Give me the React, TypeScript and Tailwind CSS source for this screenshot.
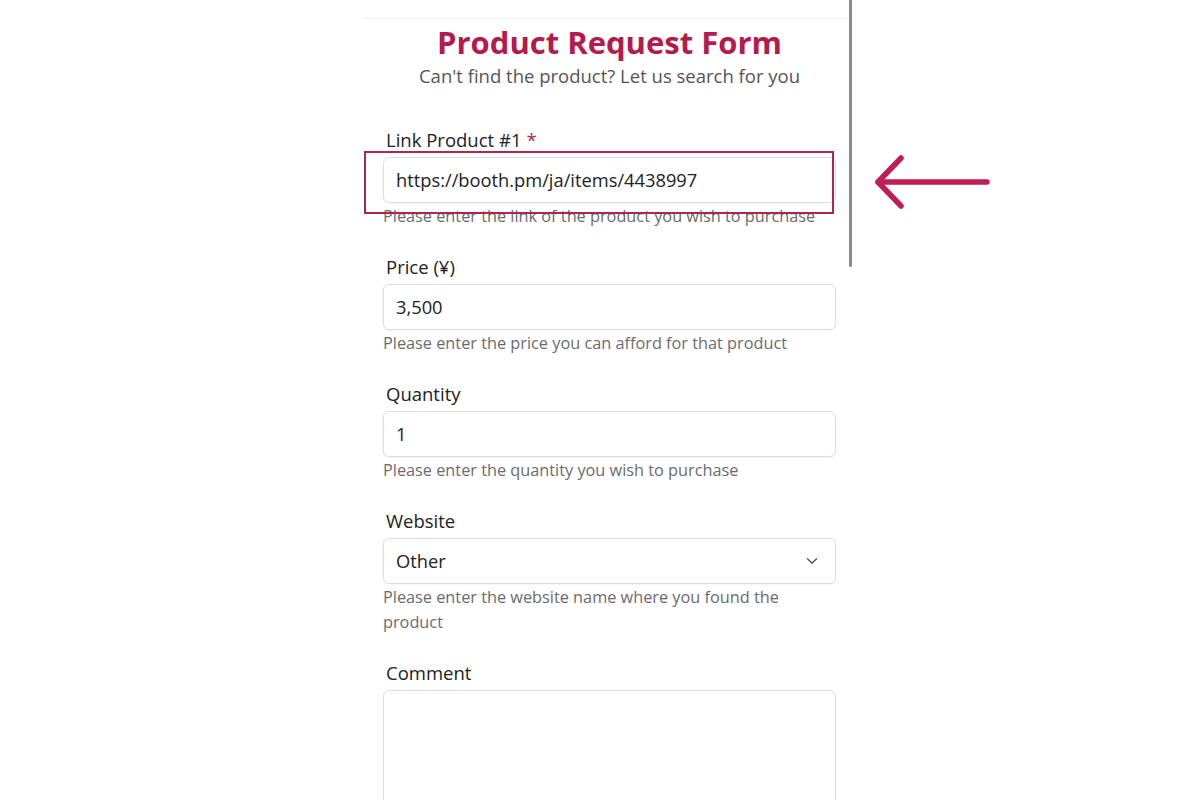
import { ChevronDown } from "lucide-react";

type Field = {
  label: string;
  value?: string;
  help: string;
  required?: boolean;
  select?: boolean;
};

const fields: Field[] = [
  {
    label: "Link Product #1",
    value: "https://booth.pm/ja/items/4438997",
    help: "Please enter the link of the product you wish to purchase",
    required: true,
  },
  { label: "Price (¥)", value: "3,500", help: "Please enter the price you can afford for that product" },
  { label: "Quantity", value: "1", help: "Please enter the quantity you wish to purchase" },
  {
    label: "Website",
    value: "Other",
    help: "Please enter the website name where you found the product",
    select: true,
  },
];

function FormField({ f }: { f: Field }) {
  return (
    <div className="mb-[26px]">
      <label className="block pl-[3px] text-[18.5px] leading-[24px] text-[#222]">
        {f.label}
        {f.required && <span className="ml-[5px] text-[#b51a4e]">*</span>}
      </label>
      <div className="mt-[5px] flex h-[46px] items-center justify-between rounded-md border border-[#dedede] bg-white pl-[12px] pr-[14px] text-[18.3px] text-[#222] shadow-[0_1px_2px_rgba(0,0,0,0.04)]">
        <span>{f.value}</span>
        {f.select && <ChevronDown size={18} strokeWidth={1.8} className="text-[#555]" />}
      </div>
      <p className="mt-px text-[16.3px] leading-[25px] text-[#6b6b6b]">{f.help}</p>
    </div>
  );
}

export default function App() {
  return (
    <div
      className="relative flex h-[800px] w-[1200px] overflow-hidden bg-white"
      style={{ fontFamily: "'Open Sans', Lato, sans-serif" }}
    >
      <div className="w-[364px] shrink-0" />

      {/* phone screen */}
      <div className="w-[485px] shrink-0">
        <div className="mt-[18px] h-px bg-[#efefef]" />
        <div className="pl-[19px] pr-[13px]">
          <h1 className="mt-[3px] text-center text-[31px] font-bold leading-[40px] text-[#b51a4e]">
            Product Request Form
          </h1>
          <p className="mt-[2px] text-center text-[18.5px] leading-[24px] text-[#555]">
            Can't find the product? Let us search for you
          </p>

          <div className="mt-[40px]">
            {fields.map((f) => (
              <FormField key={f.label} f={f} />
            ))}
            <div>
              <label className="block pl-[3px] text-[18.5px] leading-[24px] text-[#222]">Comment</label>
              <div className="mt-[5px] h-[160px] rounded-md border border-[#dedede] bg-white" />
            </div>
          </div>
        </div>
      </div>

      {/* scrollbar */}
      <div className="h-[267px] w-[3px] shrink-0 rounded-b-sm bg-[#8c8c8c]" />

      {/* annotation: highlight box + arrow */}
      <div className="pointer-events-none absolute left-[364px] top-[151px] h-[63px] w-[470px] border-2 border-[#a92852]" />
      <svg
        className="absolute left-[870px] top-[150px]"
        width="125"
        height="65"
        viewBox="0 0 125 65"
        fill="none"
        stroke="#c01d52"
        strokeWidth="5.5"
        strokeLinecap="round"
        strokeLinejoin="round"
      >
        <path d="M117 32 H8" />
        <path d="M31 8 L8 32 L31 56" />
      </svg>
    </div>
  );
}
